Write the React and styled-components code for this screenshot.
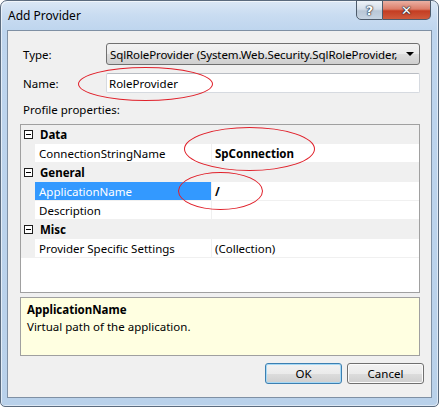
import React from "react";
import styled, { createGlobalStyle, css } from "styled-components";

const Global = createGlobalStyle`
  html, body { margin: 0; padding: 0; background: #ffffff; }
  body { font-family: "Noto Sans", "Open Sans", sans-serif; font-size: 11.5px; color: #000; }
  * { box-sizing: border-box; }
`;

const Window = styled.div`
  position: relative;
  width: 439px;
  height: 407px;
  border: 1px solid #5b6b7e;
  border-radius: 7px 7px 5px 5px;
  background: linear-gradient(180deg, #dbe8f6 0px, #c9dcf1 14px, #bed5ee 30px, #b9d1ea 100%);
  box-shadow: inset 1px 1px 0 rgba(255,255,255,0.6), inset -1px -1px 0 rgba(255,255,255,0.5);
  padding: 0 6px 8px 6px;
  display: flex;
  flex-direction: column;
`;

const TitleBar = styled.div`
  height: 29px;
  display: flex;
  justify-content: space-between;
  align-items: flex-start;
`;

const Title = styled.div`
  padding: 7px 0 0 1px;
  line-height: 15px;
  font-size: 12px;
  color: #000;
`;

const CaptionButtons = styled.div`
  display: flex;
  margin-top: -1px;
  margin-right: 1px;
`;

const CaptionButton = styled.div`
  height: 20px;
  width: ${p => p.$w}px;
  border: 1px solid #4d5b6b;
  display: flex;
  align-items: center;
  justify-content: center;
  font-family: "DejaVu Sans", sans-serif;
  font-weight: bold;
  color: #fff;
  text-shadow: 0 0 1px #1e2a38, 0 0 1px #1e2a38, 0 0 2px #1e2a38;
  ${p => p.$close ? css`
    border-left: none;
    border-radius: 0 0 5px 0;
    background: linear-gradient(180deg, #eab0a3 0%, #dc7d69 45%, #c43d22 55%, #cf5a3c 100%);
    font-size: 13px;
  ` : css`
    border-radius: 0 0 0 5px;
    background: linear-gradient(180deg, #eef3f8 0%, #d5dfea 45%, #b9c7d6 55%, #c6d4e2 100%);
    font-size: 13px;
  `}
`;

const Panel = styled.div`
  flex: 1;
  border: 1px solid #7f90a4;
  background: #f0f0f0;
  padding: 12px 7px 0 12px;
  display: flex;
  flex-direction: column;
`;

const Form = styled.div`
  display: grid;
  grid-template-columns: 86px 314px;
  row-gap: 8px;
  align-items: center;
  margin-right: 4px;
`;

const Label = styled.div`
  padding-left: 3px;
  line-height: 15px;
  color: #000;
`;

const Combo = styled.div`
  height: 22px;
  border: 1px solid #707070;
  border-radius: 3px;
  background: linear-gradient(180deg, #f2f2f2 0%, #ebebeb 50%, #dddddd 51%, #cfcfcf 100%);
  padding: 0 0 0 3px;
  display: flex;
  align-items: center;
  justify-content: space-between;
  white-space: nowrap;
`;

const ComboText = styled.span`
  line-height: 15px;
  letter-spacing: -0.1px;
`;

const Arrow = styled.span`
  flex: none;
  width: 0;
  height: 0;
  margin: 0 5px 0 4px;
  border-left: 4px solid transparent;
  border-right: 4px solid transparent;
  border-top: 4px solid #000;
`;

const TextBox = styled.div`
  height: 20px;
  border: 1px solid #d6dae0;
  border-top-color: #b9bdc3;
  border-radius: 2px;
  background: #fff;
  padding-left: 2px;
  display: flex;
  align-items: center;
  line-height: 15px;
`;

const SectionLabel = styled.div`
  margin: 9px 0 7px 3px;
  line-height: 15px;
`;

const PropGrid = styled.div`
  height: 169px;
  margin-right: 4px;
  border: 1px solid #a0a0a0;
  background: #fff;
  display: flex;
  flex-direction: column;
`;

const Row = styled.div`
  height: 19px;
  flex: none;
  display: grid;
  grid-template-columns: 14px 176px 1fr;
  align-items: stretch;
  line-height: 15px;
  ${p => p.$category && css`
    background: #f0f0f0;
    font-weight: bold;
  `}
`;

const Gutter = styled.div`
  background: #f0f0f0;
  display: flex;
  align-items: center;
  justify-content: flex-end;
`;

const Toggle = styled.span`
  position: relative;
  width: 9px;
  height: 9px;
  margin-right: 2px;
  border: 1px solid #1e1e1e;
  background: #fff;
  &::after {
    content: "";
    position: absolute;
    left: 1px;
    top: 3px;
    width: 5px;
    height: 1px;
    background: #000;
  }
`;

const CategoryName = styled.div`
  grid-column: 2 / 4;
  display: flex;
  align-items: center;
  padding-left: 5px;
`;

const NameCell = styled.div`
  display: flex;
  align-items: center;
  padding-left: 4px;
  border-bottom: 1px solid #f0f0f0;
  white-space: nowrap;
  ${p => p.$selected && css`
    background: #3399ff;
    color: #fff;
  `}
`;

const ValueCell = styled.div`
  display: flex;
  align-items: center;
  padding-left: 3px;
  border-left: 1px solid #f0f0f0;
  border-bottom: 1px solid #f0f0f0;
  white-space: nowrap;
  font-weight: ${p => (p.$bold ? "bold" : "normal")};
`;

const HelpPane = styled.div`
  margin: 4px 4px 0 0;
  height: 59px;
  border: 1px solid #a0a0a0;
  background: #ffffe1;
  padding: 3px 6px;
  line-height: 17px;
`;

const HelpTitle = styled.div`
  font-weight: bold;
`;

const Buttons = styled.div`
  margin-top: 7px;
  display: flex;
  justify-content: flex-end;
  gap: 5px;
`;

const Button = styled.div`
  width: 77px;
  height: 21px;
  border: 1px solid ${p => (p.$default ? "#3c7fb1" : "#707070")};
  border-radius: 3px;
  background: linear-gradient(180deg, #f2f2f2 0%, #ebebeb 50%, #dddddd 51%, #cfcfcf 100%);
  box-shadow: ${p => (p.$default ? "inset 0 0 0 1px #a7d9f5" : "inset 0 0 0 1px #fbfbfb")};
  display: flex;
  align-items: center;
  justify-content: center;
  line-height: 15px;
`;

const Ellipse = styled.div`
  position: absolute;
  border: 1px solid #e0202a;
  border-radius: 50%;
  pointer-events: none;
`;

const rows = [
  { category: "Data" },
  { name: "ConnectionStringName", value: "SpConnection", bold: true },
  { category: "General" },
  { name: "ApplicationName", value: "/", bold: true, selected: true },
  { name: "Description", value: "" },
  { category: "Misc" },
  { name: "Provider Specific Settings", value: "(Collection)" },
];

const ellipses = [
  { left: 77, top: 66, width: 135, height: 34 },
  { left: 183, top: 126, width: 131, height: 44 },
  { left: 177, top: 171, width: 85, height: 38 },
];

export default function App() {
  return (
    <>
      <Global />
      <Window>
        <TitleBar>
          <Title>Add Provider</Title>
          <CaptionButtons>
            <CaptionButton $w={27}>?</CaptionButton>
            <CaptionButton $w={48} $close>✕</CaptionButton>
          </CaptionButtons>
        </TitleBar>
        <Panel>
          <Form>
            <Label>Type:</Label>
            <Combo>
              <ComboText>SqlRoleProvider (System.Web.Security.SqlRoleProvider,</ComboText>
              <Arrow />
            </Combo>
            <Label>Name:</Label>
            <TextBox>RoleProvider</TextBox>
          </Form>
          <SectionLabel>Profile properties:</SectionLabel>
          <PropGrid>
            {rows.map((r, i) =>
              r.category ? (
                <Row key={i} $category>
                  <Gutter><Toggle /></Gutter>
                  <CategoryName>{r.category}</CategoryName>
                </Row>
              ) : (
                <Row key={i}>
                  <Gutter />
                  <NameCell $selected={r.selected}>{r.name}</NameCell>
                  <ValueCell $bold={r.bold}>{r.value}</ValueCell>
                </Row>
              )
            )}
          </PropGrid>
          <HelpPane>
            <HelpTitle>ApplicationName</HelpTitle>
            <div>Virtual path of the application.</div>
          </HelpPane>
          <Buttons>
            <Button $default>OK</Button>
            <Button>Cancel</Button>
          </Buttons>
        </Panel>
        {ellipses.map((e, i) => (
          <Ellipse key={i} style={{ left: e.left, top: e.top, width: e.width, height: e.height }} />
        ))}
      </Window>
    </>
  );
}
